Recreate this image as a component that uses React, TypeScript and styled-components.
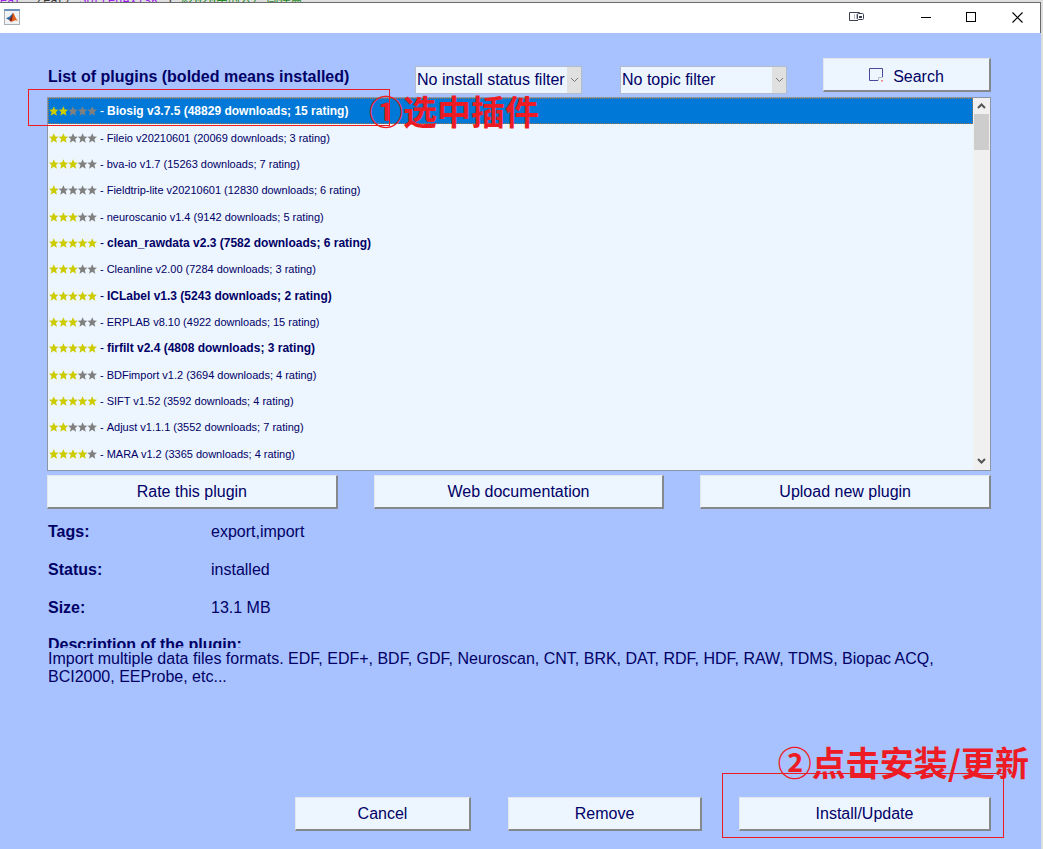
import React from "react";
import styled, { createGlobalStyle } from "styled-components";

const ink = "#000066";
const panel = "#edf5ff";
const red = "#ed1c24";

const GlobalStyle = createGlobalStyle`
  * { box-sizing: border-box; }
  body {
    margin: 0;
    background: #dedede;
    font-family: "Liberation Sans", Arial, sans-serif;
    font-size: 16px;
    line-height: 18px;
    color: ${ink};
  }
`;

const Desktop = styled.div`
  display: flex;
  flex-direction: column;
  min-height: 100vh;
  padding-right: 2px;
`;

const EditorLine = styled.div`
  height: 2px;
  overflow: hidden;
  white-space: pre;
  font: 12px/2px "Liberation Mono", "Noto Sans CJK SC", monospace;
  display: flex;
  align-items: flex-end;
`;

const Code = styled.span<{ $tone: string }>`
  color: ${(p) => p.$tone};
`;

const Window = styled.main`
  flex: 1;
  display: flex;
  flex-direction: column;
  background: #a8c2ff;
`;

const TitleBar = styled.header`
  display: flex;
  align-items: center;
  height: 31px;
  padding: 0 5px 2px 4px;
  background: #fff;
  border-top: 1px solid #6a6a6a;
  border-right: 1px solid #6a6a6a;
`;

const WindowControls = styled.div`
  display: flex;
  margin-left: auto;
`;

const ControlButton = styled.button<{ $gap?: number }>`
  display: flex;
  align-items: center;
  justify-content: center;
  width: 36px;
  height: 28px;
  margin-left: ${(p) => p.$gap ?? 10}px;
  padding: 0;
  border: 0;
  background: none;
`;

const Content = styled.div`
  flex: 1;
  display: flex;
  flex-direction: column;
  padding: 25px 50px 18px 47px;
`;

const FilterRow = styled.div`
  display: flex;
  align-items: center;
  height: 34px;
`;

const Heading = styled.h1`
  flex: 1;
  margin: 4px 0 0 1px;
  font-size: 16px;
  line-height: 18px;
  white-space: nowrap;
`;

const Filters = styled.div`
  display: flex;
  gap: 38px;
  margin: 9px 36px 0 0;
`;

const SelectBox = styled.div`
  position: relative;
  width: 167px;
  height: 28px;
`;

const Select = styled.select`
  appearance: none;
  width: 100%;
  height: 100%;
  padding: 0 14px 0 1px;
  border: 1px solid #b4bccb;
  border-radius: 0;
  background: ${panel};
  color: ${ink};
  font: inherit;
`;

const SelectArrow = styled.span`
  position: absolute;
  top: 1px;
  right: 1px;
  bottom: 1px;
  width: 14px;
  display: flex;
  align-items: center;
  justify-content: center;
  background: #e0e0e0;
  pointer-events: none;
`;

const Button = styled.button<{ $width?: number }>`
  display: flex;
  align-items: center;
  justify-content: center;
  flex: ${(p) => (p.$width ? "none" : 1)};
  width: ${(p) => (p.$width ? `${p.$width}px` : "auto")};
  height: 34px;
  padding: 0;
  border: solid;
  border-width: 1px 2px 2px 1px;
  border-color: #e3e6ea #85888c #85888c #e3e6ea;
  background: ${panel};
  color: ${ink};
  font: inherit;
`;

const SearchButton = styled(Button)`
  gap: 9px;
  padding-top: 4px;
`;

const SearchIcon = styled.svg`
  margin-bottom: 3px;
`;

const ListFrame = styled.section`
  position: relative;
  display: flex;
  height: 374px;
  margin-top: 5px;
  border: 1px solid #8d96a6;
  background: ${panel};
`;

const PluginList = styled.ul`
  flex: 1;
  display: flex;
  flex-direction: column;
  margin: 0;
  padding: 0 0 3px;
  list-style: none;
`;

const PluginRow = styled.li<{ $bold?: boolean; $selected?: boolean }>`
  flex: 1;
  display: flex;
  align-items: center;
  gap: 3px;
  padding-left: 1px;
  white-space: nowrap;
  font-size: ${(p) => (p.$bold ? 12 : 11)}px;
  font-weight: ${(p) => (p.$bold ? 700 : 400)};
  color: ${(p) => (p.$selected ? "#fff" : ink)};
  background: ${(p) => (p.$selected ? "#0078d7" : "none")};
  outline: ${(p) => (p.$selected ? "1px dotted #a0764c" : "none")};
  outline-offset: -1px;
`;

const Dash = styled.span`
  font-weight: 400;
`;

const ScrollBar = styled.div`
  display: flex;
  flex-direction: column;
  align-items: center;
  width: 17px;
  padding: 5px 0 6px;
  background: #f0f0f0;
`;

const Thumb = styled.div`
  width: 15px;
  height: 36px;
  margin: 5px 0 auto;
  background: #cdcdcd;
`;

const ButtonRow = styled.div`
  display: flex;
  gap: 36px;
  margin-top: 4px;
`;

const Details = styled.dl`
  display: grid;
  grid-template-columns: 163px 1fr;
  row-gap: 20px;
  margin: 14px 0 0 1px;
`;

const Term = styled.dt`
  font-weight: 700;
`;

const Value = styled.dd`
  margin: 0;
`;

const DescriptionTitle = styled.h2`
  height: 12px;
  margin: 19px 0 0 1px;
  overflow: hidden;
  font-size: 16px;
  line-height: 18px;
`;

const Description = styled.p`
  margin: 2px 0 0 1px;
  padding-right: 20px;
`;

const Footer = styled.footer`
  display: flex;
  justify-content: flex-end;
  gap: 37px;
  margin-top: auto;
`;

const Marked = styled.div`
  position: relative;
  display: flex;
`;

const Outline = styled.div`
  position: absolute;
  border: 1px solid ${red};
  pointer-events: none;
`;

const RowOutline = styled(Outline)`
  left: -20px;
  top: -9px;
  width: 362px;
  height: 37px;
`;

const ActionOutline = styled(Outline)`
  inset: -24px -13px -7px -17px;
`;

const Note = styled.strong`
  position: absolute;
  color: ${red};
  font: 700 34px/40px "Noto Sans CJK SC", sans-serif;
  white-space: nowrap;
  pointer-events: none;
`;

const RowNote = styled(Note)`
  left: 321px;
  top: -7px;
`;

const ActionNote = styled(Note)`
  right: -38px;
  top: -55px;
`;

const plugins = [
  { stars: 2, name: "Biosig v3.7.5 (48829 downloads; 15 rating)", bold: true },
  { stars: 2, name: "Fileio v20210601 (20069 downloads; 3 rating)" },
  { stars: 3, name: "bva-io v1.7 (15263 downloads; 7 rating)" },
  { stars: 1, name: "Fieldtrip-lite v20210601 (12830 downloads; 6 rating)" },
  { stars: 3, name: "neuroscanio v1.4 (9142 downloads; 5 rating)" },
  { stars: 5, name: "clean_rawdata v2.3 (7582 downloads; 6 rating)", bold: true },
  { stars: 3, name: "Cleanline v2.00 (7284 downloads; 3 rating)" },
  { stars: 5, name: "ICLabel v1.3 (5243 downloads; 2 rating)", bold: true },
  { stars: 3, name: "ERPLAB v8.10 (4922 downloads; 15 rating)" },
  { stars: 5, name: "firfilt v2.4 (4808 downloads; 3 rating)", bold: true },
  { stars: 3, name: "BDFimport v1.2 (3694 downloads; 4 rating)" },
  { stars: 5, name: "SIFT v1.52 (3592 downloads; 4 rating)" },
  { stars: 2, name: "Adjust v1.1.1 (3552 downloads; 7 rating)" },
  { stars: 4, name: "MARA v1.2 (3365 downloads; 4 rating)" },
];

const Stars = ({ count }: { count: number }) => (
  <svg width="48" height="10" viewBox="0 0 48 10" role="img" aria-label={`${count} of 5 stars`}>
    {[0, 1, 2, 3, 4].map((i) => (
      <path
        key={i}
        transform={`translate(${i * 9.6} 0)`}
        d="M4.8 .2 6.2 3.6 9.6 3.8 7 6.1 7.9 9.7 4.8 7.8 1.7 9.7 2.6 6.1 0 3.8 3.4 3.6Z"
        fill={i < count ? "#cccc00" : "#808080"}
      />
    ))}
  </svg>
);

const Chevron = ({ up, color = "#555", weight = 2 }: { up?: boolean; color?: string; weight?: number }) => (
  <svg width="9" height="6" viewBox="0 0 9 6" fill="none" stroke={color} strokeWidth={weight} aria-hidden>
    <path d={up ? "M1 5 4.5 1.5 8 5" : "M1 1 4.5 4.5 8 1"} />
  </svg>
);

const AppIcon = () => (
  <svg width="16" height="16" viewBox="0 0 16 16" aria-hidden>
    <rect x=".5" y=".5" width="15" height="15" fill="#f1f2f4" stroke="#a9afb6" />
    <path d="M0 0h16v2H0z" fill="#6f93b8" />
    <path d="M2 9.2 5.6 7.6 9 4 7.6 9.4 5 11Z" fill="#2f6fa8" />
    <path d="M5 11 7.2 8 9 4 10 7 8.6 11.5 7 12.8Z" fill="#7b2418" />
    <path d="M9 3.4C10.5 5.5 11.8 9.5 13.8 11.8 11.4 10.4 9.5 11.8 7.2 13.4 8.6 10 8.6 7 9 3.4Z" fill="#e2601b" />
  </svg>
);

const FilterSelect = ({ label }: { label: string }) => (
  <SelectBox>
    <Select aria-label={label}>
      <option>{label}</option>
    </Select>
    <SelectArrow>
      <Chevron color="#777" weight={1} />
    </SelectArrow>
  </SelectBox>
);

export default function App() {
  return (
    <Desktop>
      <GlobalStyle />
      <EditorLine aria-hidden>
        <Code $tone="#a020f0">{"ea( "}</Code>
        <Code $tone="#333">{"'/ear/ "}</Code>
        <Code $tone="#a020f0">SortedAxisK</Code>
        <Code $tone="#333">{" );"}</Code>
        <Code $tone="#228b22">%2020中的人/,闯存盐</Code>
      </EditorLine>
      <Window>
        <TitleBar>
          <AppIcon />
          <WindowControls>
            <ControlButton aria-label="Switch display">
              <svg width="16" height="10" viewBox="0 0 16 10" fill="none" stroke="#3c3f52" aria-hidden>
                <path d="M9 8.5H.5v-8h10V2" />
                <path d="M5.5 2v5M7.5 2v5" stroke="#b8bac4" />
                <rect x="8.5" y="1.5" width="6" height="6" rx="1" fill="#fff" />
                <path d="M10 5h3" strokeWidth="2" />
              </svg>
            </ControlButton>
            <ControlButton aria-label="Minimize" $gap={33}>
              <svg width="10" height="10" stroke="#000" aria-hidden><path d="M0 5.5h10" /></svg>
            </ControlButton>
            <ControlButton aria-label="Maximize" $gap={9}>
              <svg width="10" height="10" fill="none" stroke="#000" aria-hidden><rect x=".5" y=".5" width="9" height="9" /></svg>
            </ControlButton>
            <ControlButton aria-label="Close">
              <svg width="11" height="11" stroke="#000" strokeWidth="1.2" aria-hidden><path d="M.5.5l10 10M10.5.5l-10 10" /></svg>
            </ControlButton>
          </WindowControls>
        </TitleBar>
        <Content>
          <FilterRow>
            <Heading>List of plugins (bolded means installed)</Heading>
            <Filters>
              <FilterSelect label="No install status filter" />
              <FilterSelect label="No topic filter" />
            </Filters>
            <SearchButton $width={168}>
              <SearchIcon width="15" height="14" viewBox="0 0 15 14" fill="none" aria-hidden>
                <path d="M9 12.5H.5V.5h13V9" stroke="#4a4a9c" />
                <path d="M9.5 12.5v-3h4" stroke="#b5b5bd" />
                <path d="M12 12h2v1.5h-2z" fill="#f08080" />
              </SearchIcon>
              Search
            </SearchButton>
          </FilterRow>
          <ListFrame>
            <PluginList>
              {plugins.map((p, i) => (
                <PluginRow key={p.name} $bold={p.bold} $selected={i === 0}>
                  <Stars count={p.stars} />
                  <Dash>-</Dash>
                  <span>{p.name}</span>
                </PluginRow>
              ))}
            </PluginList>
            <ScrollBar>
              <Chevron up />
              <Thumb />
              <Chevron />
            </ScrollBar>
            <RowOutline />
            <RowNote>①选中插件</RowNote>
          </ListFrame>
          <ButtonRow>
            <Button>Rate this plugin</Button>
            <Button>Web documentation</Button>
            <Button>Upload new plugin</Button>
          </ButtonRow>
          <Details>
            <Term>Tags:</Term>
            <Value>export,import</Value>
            <Term>Status:</Term>
            <Value>installed</Value>
            <Term>Size:</Term>
            <Value>13.1 MB</Value>
          </Details>
          <DescriptionTitle>Description of the plugin:</DescriptionTitle>
          <Description>
            Import multiple data files formats. EDF, EDF+, BDF, GDF, Neuroscan, CNT, BRK, DAT, RDF, HDF, RAW, TDMS, Biopac ACQ, BCI2000, EEProbe, etc...
          </Description>
          <Footer>
            <Button $width={176}>Cancel</Button>
            <Button $width={194}>Remove</Button>
            <Marked>
              <Button $width={252}>Install/Update</Button>
              <ActionOutline />
              <ActionNote>②点击安装/更新</ActionNote>
            </Marked>
          </Footer>
        </Content>
      </Window>
    </Desktop>
  );
}
